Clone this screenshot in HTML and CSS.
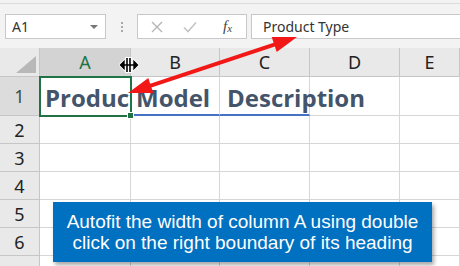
FILE: index.html
```html
<!DOCTYPE html>
<html lang="en">
<head>
  <meta charset="UTF-8">
  <title>Autofit column width</title>
  <link rel="stylesheet" href="styles.css">
</head>
<body>
  <div class="app">
    <div class="toolbar">
      <div class="namebox">
        <span>A1</span>
        <span class="caret"></span>
      </div>
      <div class="grip"><i></i><i></i><i></i></div>
      <div class="fbuttons">
        <svg class="btn-x" width="12" height="12" viewBox="0 0 12 12">
          <path d="M1 1 L11 11 M11 1 L1 11" stroke="#b4b4b4" stroke-width="1.3" fill="none"/>
        </svg>
        <svg class="btn-ok" width="14" height="12" viewBox="0 0 14 12">
          <path d="M1 6.5 L5 10.5 L13 1.5" stroke="#c4c4c4" stroke-width="1.6" fill="none"/>
        </svg>
        <span class="fx">f<sub>x</sub></span>
      </div>
      <div class="formula">Product Type</div>
    </div>

    <div class="sheet">
      <div class="hd corner"><span class="tri"></span></div>
      <div class="hd col sel">A</div>
      <div class="hd col">B</div>
      <div class="hd col">C</div>
      <div class="hd col">D</div>
      <div class="hd col">E</div>

      <div class="hd row sel">1</div>
      <div class="cell title active"><span class="clip">Product Type</span></div>
      <div class="cell title line">Model</div>
      <div class="cell title line spill">Description</div>
      <div class="cell"></div>
      <div class="cell"></div>

      <div class="hd row">2</div>
      <div class="cell"></div><div class="cell"></div><div class="cell"></div><div class="cell"></div><div class="cell"></div>
      <div class="hd row">3</div>
      <div class="cell"></div><div class="cell"></div><div class="cell"></div><div class="cell"></div><div class="cell"></div>
      <div class="hd row">4</div>
      <div class="cell"></div><div class="cell"></div><div class="cell"></div><div class="cell"></div><div class="cell"></div>
      <div class="hd row">5</div>
      <div class="cell"></div><div class="cell"></div><div class="cell"></div><div class="cell"></div><div class="cell"></div>
      <div class="hd row">6</div>
      <div class="cell"></div><div class="cell"></div><div class="cell"></div><div class="cell"></div><div class="cell"></div>
      <div class="hd row"></div>
      <div class="cell"></div><div class="cell"></div><div class="cell"></div><div class="cell"></div><div class="cell"></div>
    </div>

    <!-- resize cursor on the A|B boundary -->
    <svg class="cursor" width="20" height="20" viewBox="0 0 20 20">
      <path d="M8 2 V18 M11 2 V18" stroke="#fff" stroke-width="3.5"/>
      <path d="M1 10 L5 6 V14 Z M19 10 L15 6 V14 Z M4 10 H16" stroke="#fff" stroke-width="2.5" fill="#fff"/>
      <path d="M8 3 V17 M11 3 V17" stroke="#000" stroke-width="1.6"/>
      <path d="M1.5 10 L5 6.5 V13.5 Z M18.5 10 L15 6.5 V13.5 Z M4 10 H16" stroke="#000" stroke-width="1.4" fill="#000"/>
    </svg>

    <!-- red double arrow from formula bar to A1 -->
    <svg class="arrow" width="460" height="266" viewBox="0 0 460 266">
      <line x1="150" y1="85.8" x2="275" y2="44.3" stroke="#f21818" stroke-width="4"/>
      <polygon points="297,37 271.7,36.9 276.7,52.1" fill="#f21818"/>
      <polygon points="128,93 148.3,77.9 153.3,93.1" fill="#f21818"/>
    </svg>

    <div class="callout">
      <p>Autofit the width of column A using double</p>
      <p>click on the right boundary of its heading</p>
    </div>
  </div>
</body>
</html>
```

FILE: styles.css
```css
body {
  margin: 0;
  overflow: hidden;
  font-family: "Noto Sans", "Open Sans", sans-serif;
}

.app {
  position: relative;
  width: 460px;
  height: 266px;
  background: #f3f3f3;
  overflow: hidden;
}

/* Formula bar */
.toolbar {
  display: flex;
  align-items: flex-start;
  height: 45px;
  margin-top: 3px;
  border-top: 1px solid #dcdcdc;
  padding-top: 10px;
  box-sizing: border-box;
}

.namebox {
  display: flex;
  align-items: center;
  justify-content: space-between;
  width: 101px;
  height: 25px;
  margin-left: 5px;
  padding: 0 7px 0 6px;
  box-sizing: border-box;
  background: #fff;
  border: 1px solid #c8c8c8;
  font-size: 14px;
  color: #333;
}

.caret {
  width: 0;
  height: 0;
  border-left: 4px solid transparent;
  border-right: 4px solid transparent;
  border-top: 4px solid #777;
}

.grip {
  display: flex;
  flex-direction: column;
  align-items: center;
  gap: 2px;
  width: 31px;
  padding-top: 8px;
}

.grip i {
  width: 2px;
  height: 2px;
  background: #a8a8a8;
}

.fbuttons {
  display: flex;
  align-items: center;
  width: 110px;
  height: 25px;
  box-sizing: border-box;
  background: #fff;
  border: 1px solid #c8c8c8;
}

.btn-x { margin-left: 13px; }
.btn-ok { margin-left: 20px; }

.fx {
  margin-left: 26px;
  font-family: "Liberation Serif", serif;
  font-style: italic;
  font-size: 15px;
  color: #444;
}

.fx sub {
  font-size: 11px;
  vertical-align: -1px;
}

.formula {
  flex: 1;
  height: 25px;
  margin-left: 4px;
  margin-right: -10px;
  padding-left: 11px;
  box-sizing: border-box;
  background: #fff;
  border: 1px solid #c8c8c8;
  font-size: 14px;
  line-height: 23px;
  color: #333;
}

/* Worksheet grid */
.sheet {
  display: grid;
  grid-template-columns: 40px 91px 89px 90px 90px 60px;
  grid-template-rows: 29px 39px repeat(6, 28px);
  background: #fff;
}

.sheet > div {
  box-sizing: border-box;
  border-right: 1px solid #d6d6d6;
  border-bottom: 1px solid #d6d6d6;
}

.hd {
  display: flex;
  align-items: center;
  justify-content: center;
  background: #e9e9e9;
  font-size: 18px;
  color: #222;
}

.sheet > .hd {
  border-color: #c6c6c6;
}

.hd.sel {
  background: #d3d3d3;
  color: #217346;
}

.hd.row.sel {
  background: #dcdcdc;
  color: #3d4f43;
}

.corner {
  align-items: flex-end;
  justify-content: flex-end;
  padding: 0 3px 3px 0;
}

.tri {
  width: 20px;
  height: 17px;
  background: #b8b8b8;
  clip-path: polygon(100% 0, 100% 100%, 0 100%);
}

.cell {
  white-space: nowrap;
}

.title {
  padding: 4px 0 0 5px;
  font-family: "Open Sans", sans-serif;
  font-weight: 700;
  font-size: 24px;
  color: #44546a;
}

.sheet > .line {
  border-bottom: 2px solid #4472c4;
}

.spill {
  padding-left: 7px;
  overflow: visible;
}

.active {
  position: relative;
}

.clip {
  display: block;
  overflow: hidden;
}

.active::before {
  content: "";
  position: absolute;
  inset: -1px -2px -2px -1px;
  border: 2px solid #217346;
}

.active::after {
  content: "";
  position: absolute;
  right: -4px;
  bottom: -4px;
  width: 5px;
  height: 5px;
  background: #217346;
  border: 1px solid #fff;
}

/* overlays */
.cursor {
  position: absolute;
  left: 119px;
  top: 55px;
}

.arrow {
  position: absolute;
  left: 0;
  top: 0;
}

.callout {
  position: absolute;
  left: 53px;
  top: 202px;
  width: 379px;
  height: 60px;
  display: flex;
  flex-direction: column;
  justify-content: center;
  background: #0070c0;
  box-shadow: 2px 3px 4px rgba(0, 0, 0, 0.35);
  font-family: "Liberation Sans", Arial, sans-serif;
  font-size: 19px;
  line-height: 21px;
  color: #fff;
  text-align: center;
}

.callout p {
  margin: 0;
}
```
